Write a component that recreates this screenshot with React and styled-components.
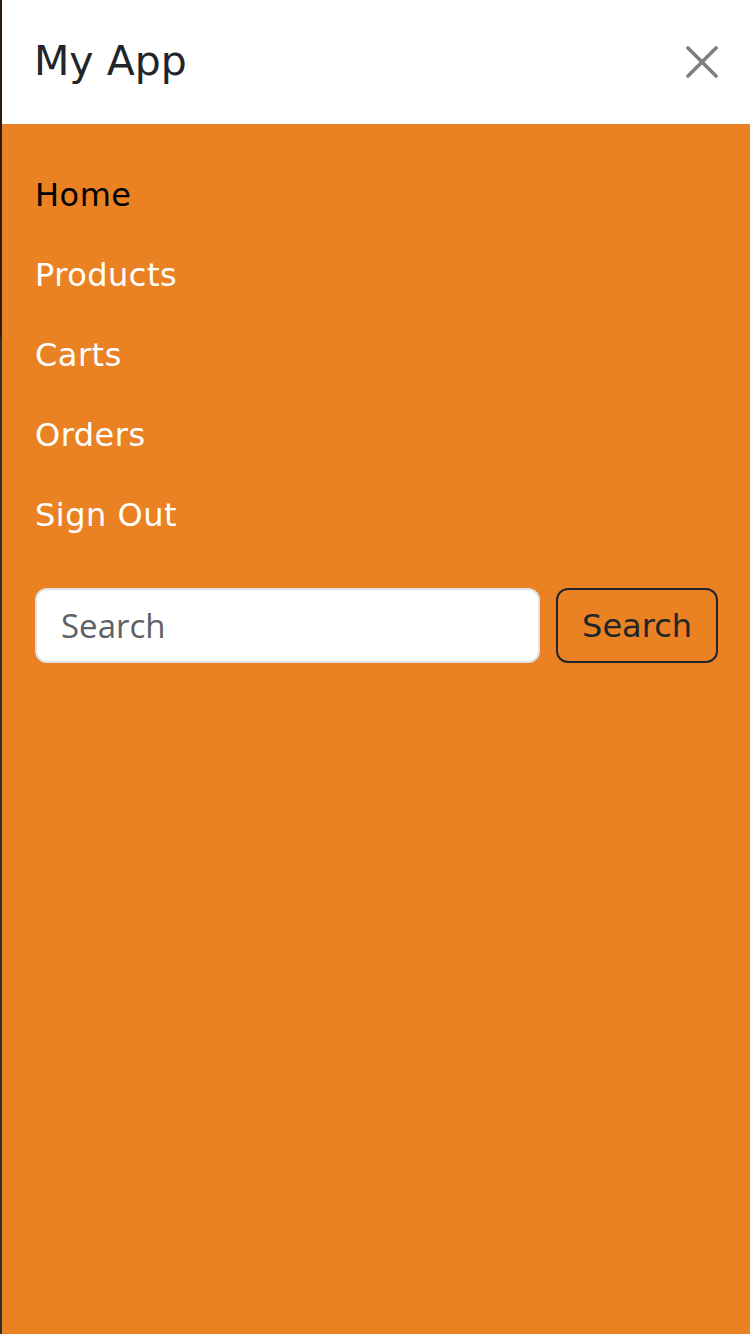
import React from 'react';
import styled, { createGlobalStyle } from 'styled-components';

const GlobalStyle = createGlobalStyle`
    html, body {
        margin: 0;
        padding: 0;
        height: 100%;
    }
    body {
        background: linear-gradient(to bottom, #2b1b0c 0, #2b1b0c 337px, #2f2f2f 337px);
        font-family: "DejaVu Sans", "Liberation Sans", sans-serif;
    }
    #root {
        min-height: 100%;
    }
`;

const links = ['Home', 'Products', 'Carts', 'Orders', 'Sign Out'];

const App = () => {
    return (
        <>
            <GlobalStyle />
            <Panel>
                <Header>
                    <Title>My App</Title>
                    <CloseButton type='button' aria-label='Close'>
                        <svg width='32' height='32' viewBox='0 0 32 32'>
                            <path
                                d='M2 2 L30 30 M30 2 L2 30'
                                stroke='#7f7f7f'
                                strokeWidth='3.6'
                                strokeLinecap='round'
                                fill='none'
                            />
                        </svg>
                    </CloseButton>
                </Header>
                <Body>
                    <Nav>
                        {links.map((l, i) => (
                            <NavLink key={l} href='#' $active={i === 0}>
                                {l}
                            </NavLink>
                        ))}
                    </Nav>
                    <Form onSubmit={(e) => e.preventDefault()}>
                        <SearchInput type='search' placeholder='Search' />
                        <SearchButton type='submit'>Search</SearchButton>
                    </Form>
                </Body>
            </Panel>
        </>
    );
};

const Panel = styled.div`
    margin-left: 2px;
    min-height: 100vh;
    background-color: #ea8224;
    display: flex;
    flex-direction: column;
`;

const Header = styled.div`
    height: 124px;
    box-sizing: border-box;
    padding: 0 32px 0 32px;
    background: #fff;
    display: flex;
    align-items: center;
    justify-content: space-between;
`;

const Title = styled.h5`
    margin: 0;
    font-size: 41px;
    font-weight: 400;
    line-height: 1.2;
    color: #212529;
`;

const CloseButton = styled.button`
    width: 32px;
    height: 32px;
    padding: 0;
    border: none;
    background: transparent;
    display: flex;
    cursor: pointer;
`;

const Body = styled.div`
    padding: 31px 32px 32px 33px;
`;

const Nav = styled.nav`
    display: flex;
    flex-direction: column;
`;

const NavLink = styled.a`
    display: block;
    padding: 16px 0;
    font-size: 32px;
    letter-spacing: 0.5px;
    line-height: 48px;
    text-decoration: none;
    color: ${(p) => (p.$active ? '#000' : '#fff')};
`;

const Form = styled.form`
    display: flex;
    gap: 16px;
    margin-top: 33px;
`;

const SearchInput = styled.input`
    flex: 1;
    min-width: 0;
    height: 75px;
    box-sizing: border-box;
    padding: 0 24px;
    border: 2px solid #dee2e6;
    border-radius: 12px;
    background: #fff;
    font-family: "Open Sans", sans-serif;
    font-size: 33px;
    color: #212529;
    outline: none;
    &::placeholder {
        color: #5d6166;
    }
`;

const SearchButton = styled.button`
    height: 75px;
    box-sizing: border-box;
    padding: 0 24px;
    border: 2px solid #212529;
    border-radius: 12px;
    background: transparent;
    font-family: "DejaVu Sans", sans-serif;
    font-size: 32px;
    color: #212529;
    cursor: pointer;
`;

export default App;
